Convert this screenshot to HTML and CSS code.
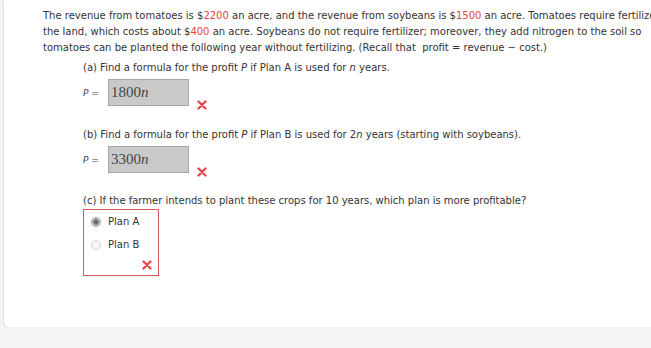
FILE: index.html
```html
<!DOCTYPE html>
<html>
<head>
<meta charset="utf-8">
<link rel="stylesheet" href="styles.css">
</head>
<body>
<div class="card">
  <p class="intro">The revenue from tomatoes is $<span class="num">2200</span> an acre, and the revenue from soybeans is $<span class="num">1500</span> an acre. Tomatoes require fertilizer to prepare<br>the land, which costs about $<span class="num">400</span> an acre. Soybeans do not require fertilizer; moreover, they add nitrogen to the soil so<br>tomatoes can be planted the following year without fertilizing. (Recall that&nbsp; profit = revenue − cost.)</p>
  <div class="part">
    <p class="q">(a) Find a formula for the profit <i>P</i> if Plan A is used for <i>n</i> years.</p>
    <div class="answer">
      <span class="plabel"><i>P</i> = </span>
      <span class="box">1800<i>n</i></span>
      <svg class="xmark" viewBox="0 0 10 10" width="10" height="10"><path d="M1.5 1.5 L8.5 8.5 M8.5 1.5 L1.5 8.5" stroke="#e8484c" stroke-width="2.4" stroke-linecap="round"/></svg>
    </div>
    <p class="q qb">(b) Find a formula for the profit <i>P</i> if Plan B is used for 2<i>n</i> years (starting with soybeans).</p>
    <div class="answer">
      <span class="plabel"><i>P</i> = </span>
      <span class="box">3300<i>n</i></span>
      <svg class="xmark" viewBox="0 0 10 10" width="10" height="10"><path d="M1.5 1.5 L8.5 8.5 M8.5 1.5 L1.5 8.5" stroke="#e8484c" stroke-width="2.4" stroke-linecap="round"/></svg>
    </div>
    <p class="q qc">(c) If the farmer intends to plant these crops for 10 years, which plan is more profitable?</p>
    <div class="choices">
      <div class="choice"><span class="radio on"></span><span>Plan A</span></div>
      <div class="choice"><span class="radio"></span><span>Plan B</span></div>
      <svg class="xmark small" viewBox="0 0 10 10" width="10" height="10"><path d="M1.5 1.5 L8.5 8.5 M8.5 1.5 L1.5 8.5" stroke="#e8484c" stroke-width="2.4" stroke-linecap="round"/></svg>
    </div>
  </div>
</div>
</body>
</html>
```
FILE: styles.css
```css
html, body {
  margin: 0;
  padding: 0;
  background: #f4f4f4;
  overflow: hidden;
}
body {
  font-family: "DejaVu Sans", Verdana, sans-serif;
  font-size: 10px;
  color: #333;
}
.card {
  margin-left: 4px;
  width: 720px;
  height: 327px;
  box-sizing: border-box;
  background: #fff;
  border-radius: 0 0 0 5px;
  box-shadow: 0 1px 2px rgba(0,0,0,0.12), -1px 0 1px rgba(0,0,0,0.05);
  padding: 8px 0 0 39px;
}
.intro {
  margin: 0;
  line-height: 16px;
  white-space: nowrap;
}
.num { color: #e8453c; }
.part { padding-left: 40px; }
.q {
  margin: 4px 0 0;
  line-height: 16px;
  white-space: nowrap;
}
.qb { margin-top: 21px; }
.qc { margin-top: 20px; }
.answer {
  display: flex;
  align-items: flex-end;
  margin-top: 3px;
  height: 27px;
}
.plabel {
  width: 25px;
  align-self: center;
  font-size: 9px;
  color: #444;
}
.box {
  box-sizing: border-box;
  width: 81px;
  height: 27px;
  background: #c9c9c9;
  border: 1px solid #a6a6a6;
  font-family: "Liberation Serif", "Times New Roman", serif;
  font-size: 15px;
  color: #444;
  padding: 3px 0 0 2px;
  line-height: 18px;
}
.xmark {
  display: block;
  margin-left: 8px;
  margin-bottom: -4px;
}
.choices {
  box-sizing: border-box;
  width: 76px;
  height: 67px;
  border: 1px solid #d45a5a;
  display: flex;
  flex-direction: column;
  padding: 5px 0 0 7px;
  gap: 9px;
  position: relative;
}
.choice {
  display: flex;
  align-items: center;
  gap: 7px;
  line-height: 14px;
}
.radio {
  box-sizing: border-box;
  width: 10px;
  height: 10px;
  border-radius: 50%;
  border: 1px solid #d8d8d8;
  background: #f7f7f7;
}
.radio.on {
  border-color: #a0a0a0;
  background: radial-gradient(circle, #707070 0 2.5px, #c8c8c8 3px);
}
.xmark.small {
  position: absolute;
  right: 6px;
  bottom: 5px;
  margin: 0;
}
```
